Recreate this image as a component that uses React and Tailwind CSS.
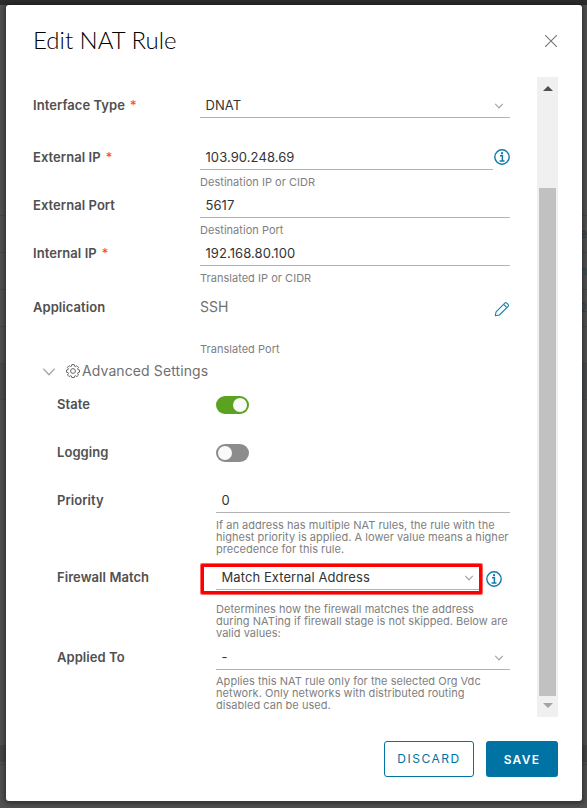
import React, { useState } from "react";

const InfoIcon = () => (
  <svg width="16" height="16" viewBox="0 0 16 16" fill="none" stroke="#0f7bab" className="shrink-0">
    <circle cx="8" cy="8" r="7.2" strokeWidth="1.4" />
    <path d="M6 6.700h2.400v4.900M5.600 12h4.900" strokeWidth="1.5" />
    <rect x="7" y="3.200" width="2" height="2" fill="#0f7bab" stroke="none" />
  </svg>
);

const PencilIcon = () => (
  <svg width="16" height="16" viewBox="0 0 16 16" fill="none" stroke="#1b80ae" strokeWidth="1.1" strokeLinejoin="round" className="shrink-0">
    <path d="M1.3 14.7l.8-3.9 8.7-8.7c.6-.6 1.4-.6 2 0l1.3 1.3c.6.6.6 1.4 0 2l-8.7 8.6z" />
    <path d="M9.600 3.400l3.200 3.200" />
  </svg>
);

const ChevronDown = ({ size = 8, stroke = 1.2 }) => (
  <svg width={size} height={size} viewBox="0 0 8 8" fill="none" stroke="#a3a3a3" strokeWidth={stroke} className="shrink-0">
    <path d="M.2 1.800l3.800 4 3.800-4" />
  </svg>
);

const GearIcon = () => (
  <svg width="14" height="14" viewBox="0 0 14 14" fill="none" stroke="#666" strokeWidth="1" strokeLinejoin="round" className="shrink-0">
    <path d="M5.8.6h2.4l.4 1.7.8.3 1.5-.9 1.6 1.6-.9 1.5.3.8 1.6.4v2.2l-1.6.4-.3.9.9 1.5-1.6 1.6-1.5-.9-.8.3-.4 1.5H5.8l-.4-1.5-.8-.3-1.5.9L1.5 11l.9-1.5-.3-.9L.5 8.2V6l1.6-.4.3-.8-.9-1.5 1.6-1.6 1.5.9.8-.3z" />
    <circle cx="7" cy="7" r="2.4" />
  </svg>
);

const Helper = ({ text, className = "mt-1.5" }) => (
  <p className={`text-[11px] leading-3 tracking-[0.03px] whitespace-pre text-[#808080] ${className}`}>{text}</p>
);

const Label = ({ text, required, className = "w-[167px]" }) => (
  <div className={`shrink-0 text-[13px] leading-[22px] font-semibold tracking-[0.06px] text-[#505050] ${className}`}>
    {text}
    {required && <span className="ml-[5px] font-normal text-[#ff3b30]">*</span>}
  </div>
);

const Field = ({ value, select }) => (
  <div className="flex h-6 min-w-0 flex-1 items-center justify-between border-b border-[#b3b3b3] pr-[7px] pl-[5.5px] text-[13px] tracking-[0.08px] text-[#333]">
    <span>{value}</span>
    {select && <ChevronDown />}
  </div>
);

const Toggle = ({ on, onChange }) => (
  <button
    onClick={onChange}
    className={`flex h-[18px] w-[33px] items-center rounded-full px-0.5 ${on ? "justify-end bg-[#5aa220]" : "justify-start bg-[#8c8c8c]"}`}
  >
    <span className="size-3.5 rounded-full bg-[#fafafa]" />
  </button>
);

// Dimmed table rows of the page under the dialog
const Backdrop = () => (
  <div className="absolute inset-0 overflow-hidden bg-[#505050] text-right text-[12px] text-[#343b40]">
    <div className="h-[5px] bg-[#2b2b2b]" />
    <div className="h-[210px]" />
    <div className="h-[37px] border-t border-[#464646] leading-[36px]">e</div>
    <div className="h-[37px] border-t border-[#464646] leading-[36px] text-[#2c4653]">n</div>
    <div className="h-[37px] border-t border-[#464646] leading-[36px] text-[#2c4653]">2</div>
    <div className="h-[37px] border-t border-[#464646]" />
    <div className="h-[37px] border-y border-[#464646] bg-[#4a4b4c]" />
    <div className="h-[345px]" />
    <div className="h-[17px] bg-[#454545]" />
    <div className="mt-0.5 border-t border-[#464646]" />
  </div>
);

export default function App() {
  const [state, setState] = useState(true);
  const [logging, setLogging] = useState(false);

  return (
    <div className="relative h-[808px] w-[587px] overflow-hidden font-['Inter',sans-serif]">
      <Backdrop />
      <div className="relative mt-[5px] ml-1.5 flex h-[796px] w-[576px] flex-col rounded-[3px] bg-white pr-6 pl-[27px] shadow-[0_1px_4px_2px_rgba(0,0,0,0.35)]">
        {/* Header */}
        <div className="flex h-[72px] shrink-0 items-center justify-between">
          <h1 className="pb-0.5 font-['Lato',sans-serif] text-[24px] font-light text-black">Edit NAT Rule</h1>
          <button className="mr-px">
            <svg width="12" height="12" viewBox="0 0 12 12" stroke="#777" strokeWidth="1.1">
              <path d="M0 0l12 12M12 0L0 12" />
            </svg>
          </button>
        </div>

        {/* Form */}
        <div className="flex h-[640px] shrink-0 justify-between">
          <div className="w-[477px] pt-[17px]">
            <div className="flex h-[52px]">
              <Label text="Interface Type" required />
              <Field value="DNAT" select />
            </div>
            <div className="flex h-12">
              <Label text="External IP" required />
              <div className="min-w-0 flex-1">
                <div className="flex">
                  <Field value="103.90.248.69" />
                  <span className="mt-[3px] ml-px"><InfoIcon /></span>
                </div>
                <Helper text="Destination IP or CIDR" />
              </div>
            </div>
            <div className="flex h-12">
              <Label text="External Port" />
              <div className="min-w-0 flex-1">
                <div className="flex"><Field value="5617" /></div>
                <Helper text="Destination Port" />
              </div>
            </div>
            <div className="flex h-[53px]">
              <Label text="Internal IP" required />
              <div className="min-w-0 flex-1">
                <div className="flex"><Field value="192.168.80.100" /></div>
                <Helper text="Translated IP or CIDR" />
              </div>
            </div>
            <div className="flex h-[66px]">
              <Label text="Application" className="w-[167px] pt-px" />
              <div className="min-w-0 flex-1">
                <div className="flex h-6 items-center justify-between text-[14px] text-[#707070]">
                  <span className="pb-0.5">SSH</span>
                  <span className="mt-1"><PencilIcon /></span>
                </div>
                <Helper text="Translated Port" className="mt-6" />
              </div>
            </div>

            <div className="flex h-5 items-center pl-2.5 text-[14px] tracking-[0.1px] text-[#707070]">
              <span className="mt-0.5"><ChevronDown size={12} stroke={0.9} /></span>
              <span className="mr-0.5 ml-[11px]"><GearIcon /></span>
              <span className="pb-0.5">Advanced Settings</span>
            </div>

            {/* Advanced settings */}
            <div className="pt-3 pl-6">
              <div className="flex h-12">
                <Label text="State" className="w-[159px]" />
                <div className="pt-[3px]"><Toggle on={state} onChange={() => setState(!state)} /></div>
              </div>
              <div className="flex h-12">
                <Label text="Logging" className="w-[159px]" />
                <div className="pt-[3px]"><Toggle on={logging} onChange={() => setLogging(!logging)} /></div>
              </div>
              <div className="flex h-[77px]">
                <Label text="Priority" className="w-[159px]" />
                <div className="min-w-0 flex-1">
                  <div className="flex"><Field value="0" /></div>
                  <Helper
                    text={"If an address has multiple NAT rules, the rule with the\nhighest priority is applied. A lower value means a higher\nprecedence for this rule."}
                  />
                </div>
              </div>
              <div className="flex h-20">
                <Label text="Firewall Match" className="w-[159px]" />
                <div className="min-w-0 flex-1">
                  <div className="relative flex items-center pr-2">
                    <Field value="Match External Address" select />
                    <span className="mt-0.5 ml-1.5"><InfoIcon /></span>
                    <div className="absolute -top-0.5 -left-[15px] h-[30px] w-[281px] rounded-[1px] border-[3px] border-[#ff0000] shadow-[0_0_0_1px_rgba(255,0,0,0.6)]" />
                  </div>
                  <Helper
                    className="mt-[13px]"
                    text={"Determines how the firewall matches the address\nduring NATing if firewall stage is not skipped. Below are\nvalid values:"}
                  />
                </div>
              </div>
              <div className="flex">
                <Label text="Applied To" className="w-[159px]" />
                <div className="min-w-0 flex-1">
                  <div className="flex"><Field value="-" select /></div>
                  <Helper
                    className="mt-[5px]"
                    text={"Applies this NAT rule only for the selected Org Vdc\nnetwork. Only networks with distributed routing\ndisabled can be used."}
                  />
                </div>
              </div>
            </div>
          </div>

          {/* Scrollbar */}
          <div className="flex w-[21px] flex-col items-center bg-[#f0f0f0]">
            <div className="flex h-[111px] w-full shrink-0 justify-center pt-[9px]">
              <svg width="10" height="5" viewBox="0 0 10 5" fill="#505050"><path d="M0 5l5-5 5 5z" /></svg>
            </div>
            <div className="w-[17px] flex-1 bg-[#c1c1c1]" />
            <div className="flex h-[21px] w-full shrink-0 justify-center pt-[7px]">
              <svg width="10" height="5" viewBox="0 0 10 5" fill="#a3a3a3"><path d="M0 0l5 5 5-5z" /></svg>
            </div>
          </div>
        </div>

        {/* Footer */}
        <div className="mt-6 flex justify-end gap-3 text-[12px]">
          <button className="h-9 w-[90px] rounded-[3px] border border-[#0072a3] tracking-[1.5px] text-[#0072a3]">DISCARD</button>
          <button className="h-9 w-[72px] rounded-[3px] bg-[#0072a3] pt-px text-[12px] font-semibold tracking-[1.3px] text-white">SAVE</button>
        </div>
      </div>
    </div>
  );
}
